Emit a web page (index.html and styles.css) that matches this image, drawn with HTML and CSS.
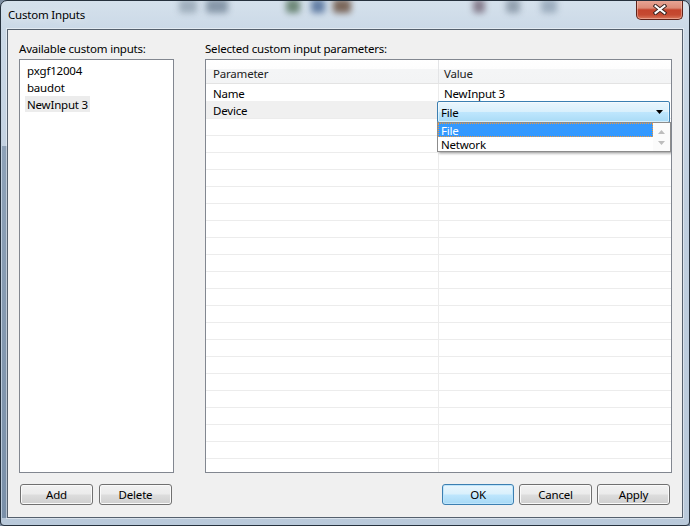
FILE: index.html
```html
<!DOCTYPE html>
<html>
<head>
<meta charset="utf-8">
<title>Custom Inputs</title>
<link rel="stylesheet" href="styles.css">
</head>
<body>
<div class="window">
  <div class="glass">
    <span class="blob b1"></span><span class="blob b2"></span><span class="blob b3"></span>
    <span class="blob b4"></span><span class="blob b5"></span><span class="blob b6"></span>
    <span class="blob b7"></span><span class="blob b8"></span>
  </div>
  <div class="titlebar">
    <span class="title">Custom Inputs</span>
    <div class="close">
      <svg width="14" height="11" viewBox="0 0 14 11">
        <path d="M2.5 2 L11.5 9 M11.5 2 L2.5 9" stroke="#3a2420" stroke-width="4" stroke-linecap="square"/>
        <path d="M2.5 2 L11.5 9 M11.5 2 L2.5 9" stroke="#ffffff" stroke-width="2" stroke-linecap="square"/>
      </svg>
    </div>
  </div>
  <div class="client">
    <div class="panes">
      <div class="pane pane-left">
        <div class="label">Available custom inputs:</div>
        <div class="listbox">
          <div class="item">pxgf12004</div>
          <div class="item">baudot</div>
          <div class="item item-selected">NewInput 3</div>
        </div>
      </div>
      <div class="pane pane-right">
        <div class="label">Selected custom input parameters:</div>
        <div class="grid">
          <div class="row row-head"><div class="cell c1">Parameter</div><div class="cell c2">Value</div></div>
          <div class="row row-plain"><div class="cell c1">Name</div><div class="cell c2">NewInput 3</div></div>
          <div class="row row-plain row-current"><div class="cell c1">Device</div><div class="cell c2"></div></div>
          <div class="row"><div class="cell c1"></div><div class="cell c2"></div></div>
          <div class="row"><div class="cell c1"></div><div class="cell c2"></div></div>
          <div class="row"><div class="cell c1"></div><div class="cell c2"></div></div>
          <div class="row"><div class="cell c1"></div><div class="cell c2"></div></div>
          <div class="row"><div class="cell c1"></div><div class="cell c2"></div></div>
          <div class="row"><div class="cell c1"></div><div class="cell c2"></div></div>
          <div class="row"><div class="cell c1"></div><div class="cell c2"></div></div>
          <div class="row"><div class="cell c1"></div><div class="cell c2"></div></div>
          <div class="row"><div class="cell c1"></div><div class="cell c2"></div></div>
          <div class="row"><div class="cell c1"></div><div class="cell c2"></div></div>
          <div class="row"><div class="cell c1"></div><div class="cell c2"></div></div>
          <div class="row"><div class="cell c1"></div><div class="cell c2"></div></div>
          <div class="row"><div class="cell c1"></div><div class="cell c2"></div></div>
          <div class="row"><div class="cell c1"></div><div class="cell c2"></div></div>
          <div class="row"><div class="cell c1"></div><div class="cell c2"></div></div>
          <div class="row"><div class="cell c1"></div><div class="cell c2"></div></div>
          <div class="row"><div class="cell c1"></div><div class="cell c2"></div></div>
          <div class="row"><div class="cell c1"></div><div class="cell c2"></div></div>
          <div class="row"><div class="cell c1"></div><div class="cell c2"></div></div>
          <div class="row"><div class="cell c1"></div><div class="cell c2"></div></div>
          <div class="row"><div class="cell c1"></div><div class="cell c2"></div></div>
          <div class="row"><div class="cell c1"></div><div class="cell c2"></div></div>

          <div class="combo">
            <span class="combo-text">File</span>
            <svg class="combo-arrow" width="7" height="4" viewBox="0 0 7 4"><path d="M0 0 H7 L3.5 4 Z" fill="#000"/></svg>
          </div>
          <div class="popup">
            <div class="options">
              <div class="option option-selected">File</div>
              <div class="option">Network</div>
            </div>
            <div class="scroll">
              <svg width="7" height="4" viewBox="0 0 7 4"><path d="M0 4 H7 L3.5 0 Z" fill="#bdbdbd"/></svg>
              <svg width="7" height="4" viewBox="0 0 7 4"><path d="M0 0 H7 L3.5 4 Z" fill="#bdbdbd"/></svg>
            </div>
          </div>
        </div>
      </div>
    </div>
    <div class="buttons">
      <div class="group group-left">
        <div class="btn">Add</div>
        <div class="btn">Delete</div>
      </div>
      <div class="group group-right">
        <div class="btn btn-default">OK</div>
        <div class="btn">Cancel</div>
        <div class="btn">Apply</div>
      </div>
    </div>
  </div>
</div>
</body>
</html>
```

FILE: styles.css
```css
* { box-sizing: border-box; }
html, body { margin: 0; padding: 0; }
body {
  width: 690px;
  height: 526px;
  overflow: hidden;
  font-family: "Noto Sans", "Open Sans", sans-serif;
  font-size: 11.5px;
  letter-spacing: -0.2px;
  color: #000;
  background: #7d8ea2;
}
.window {
  position: relative;
  width: 690px;
  height: 526px;
  border: 1px solid #26313d;
  border-radius: 7px 7px 4px 4px;
  display: flex;
  flex-direction: column;
  overflow: hidden;
  background:
    linear-gradient(#8ea2b8, #7a90a9) 1px 145px / 5px 372px no-repeat,
    linear-gradient(180deg, #d5e1ec 0px, #cbd9e7 28px, #c0cfdf 200px, #b9c9da 100%);
}
.glass {
  position: absolute;
  left: 0; top: 0;
  width: 690px;
  height: 28px;
  pointer-events: none;
}
.blob {
  position: absolute;
  top: -2px;
  height: 14px;
  border-radius: 3px;
  filter: blur(3px);
  opacity: 0.75;
}
.b1 { left: 178px; width: 18px; background: #8f9fae; }
.b2 { left: 205px; width: 22px; background: #6d7f92; }
.b3 { left: 285px; width: 14px; background: #4c6b52; }
.b4 { left: 310px; width: 14px; background: #3f5f8e; }
.b5 { left: 332px; width: 18px; background: #5e3f2a; }
.b6 { left: 472px; width: 12px; background: #6d5d6e; }
.b7 { left: 505px; width: 14px; background: #7d8c9c; }
.b8 { left: 540px; width: 16px; background: #8b9db0; }
.titlebar {
  position: relative;
  height: 28px;
  display: flex;
  align-items: flex-start;
  flex: none;
}
.title {
  padding-left: 7px;
  line-height: 28px;
  color: #000;
  text-shadow: 0 0 8px rgba(255,255,255,0.9);
}
.close {
  margin-left: auto;
  margin-right: 6px;
  margin-top: -1px;
  width: 47px;
  height: 20px;
  border: 1px solid #5e2219;
  border-top: none;
  border-radius: 0 0 5px 5px;
  background: linear-gradient(180deg, #e9a898 0%, #dc8b77 42%, #c4442c 52%, #c54a31 78%, #d9785c 100%);
  box-shadow: inset 0 0 0 1px rgba(255,210,200,0.45);
  display: flex;
  align-items: center;
  justify-content: center;
}
.client {
  flex: none;
  height: 489px;
  margin: 0 6px 7px 6px;
  border: 1px solid #55606d;
  background: #f0f0f0;
  box-shadow: 0 0 0 1px rgba(255,255,255,0.45);
  padding: 10px 10px 12px 11px;
  display: flex;
  flex-direction: column;
}
.panes {
  display: flex;
  gap: 31px;
  height: 433px;
}
.pane { display: flex; flex-direction: column; }
.pane-left { width: 155px; }
.pane-right { width: 467px; }
.label {
  height: 19px;
  line-height: 17px;
  color: #000;
}
.listbox {
  flex: 1;
  border: 1px solid #828790;
  background: #fff;
  padding: 2px 0 0 5px;
}
.item {
  width: fit-content;
  height: 16px;
  line-height: 17px;
  margin-bottom: 1px;
  padding: 0 2px;
}
.item-selected { background: #ececec; }
.grid {
  position: relative;
  flex: 1;
  border: 1px solid #828790;
  background: #fff;
  overflow: hidden;
}
.row {
  display: flex;
  height: 17px;
  border-top: 1px solid #ececec;
}
.row-plain { border-top: none; }
.row-head {
  height: 24px;
  border-top: none;
  background: linear-gradient(180deg, #ffffff 0%, #fdfdfd 40%, #f4f5f6 41%, #f3f4f5 100%);
  border-bottom: 1px solid #e3e3e3;
}
.row-head .cell { line-height: 27px; color: #222; }
.row-head .c2 { border-left: 1px solid #e3e4e6; }
.cell {
  line-height: 17px;
  white-space: nowrap;
  overflow: hidden;
}
.c1 { width: 232px; padding-left: 7px; }
.c2 { flex: 1; padding-left: 5px; border-left: 1px solid #ececec; }
.row-plain .cell { line-height: 20px; }
.row-current .c1 { background: #f0f0f0; }
.combo {
  position: absolute;
  left: 231px;
  top: 41px;
  width: 233px;
  height: 22px;
  border: 1px solid #3c7fb1;
  border-radius: 2px;
  background: linear-gradient(180deg, #eaf6fd 0%, #d9f0fc 48%, #bee6fd 52%, #a9dbf6 100%);
  box-shadow: inset 0 0 0 1px rgba(255,255,255,0.5);
  display: flex;
  align-items: center;
  padding: 0 4px 0 3px;
}
.combo-text { flex: 1; line-height: 20px; padding-top: 1px; }
.combo-arrow { margin-right: 2px; }
.popup {
  position: absolute;
  left: 231px;
  top: 62px;
  width: 234px;
  height: 30px;
  border: 1px solid #8c8c8c;
  background: #fff;
  box-shadow: 2px 2px 2px rgba(0,0,0,0.25);
  display: flex;
}
.options { flex: 1; }
.option {
  height: 14px;
  line-height: 15px;
  padding-left: 3px;
}
.option-selected {
  background: #3399ff;
  color: #fff;
  outline: 1px dotted #f29a3c;
  outline-offset: -1px;
}
.scroll {
  width: 17px;
  display: flex;
  flex-direction: column;
  align-items: center;
  justify-content: space-around;
  padding: 3px 0;
  background: #fbfbfb;
}
.buttons {
  display: flex;
  justify-content: space-between;
  margin-top: 11px;
  padding: 0 2px 0 1px;
}
.group { display: flex; }
.group-left { gap: 6px; }
.group-right { gap: 5px; }
.btn {
  width: 73px;
  height: 21px;
  border: 1px solid #707070;
  border-radius: 3px;
  background: linear-gradient(180deg, #f2f2f2 0%, #ebebeb 48%, #dddddd 52%, #cfcfcf 100%);
  box-shadow: inset 0 0 0 1px #fafafa;
  text-align: center;
  line-height: 20px;
  color: #000;
}
.btn-default {
  width: 72px;
  border-color: #3c7fb1;
  background: linear-gradient(180deg, #eaf6fd 0%, #d9f0fc 48%, #bee6fd 52%, #a7d9f5 100%);
  box-shadow: inset 0 0 0 1px #bfe5fb;
}
```
